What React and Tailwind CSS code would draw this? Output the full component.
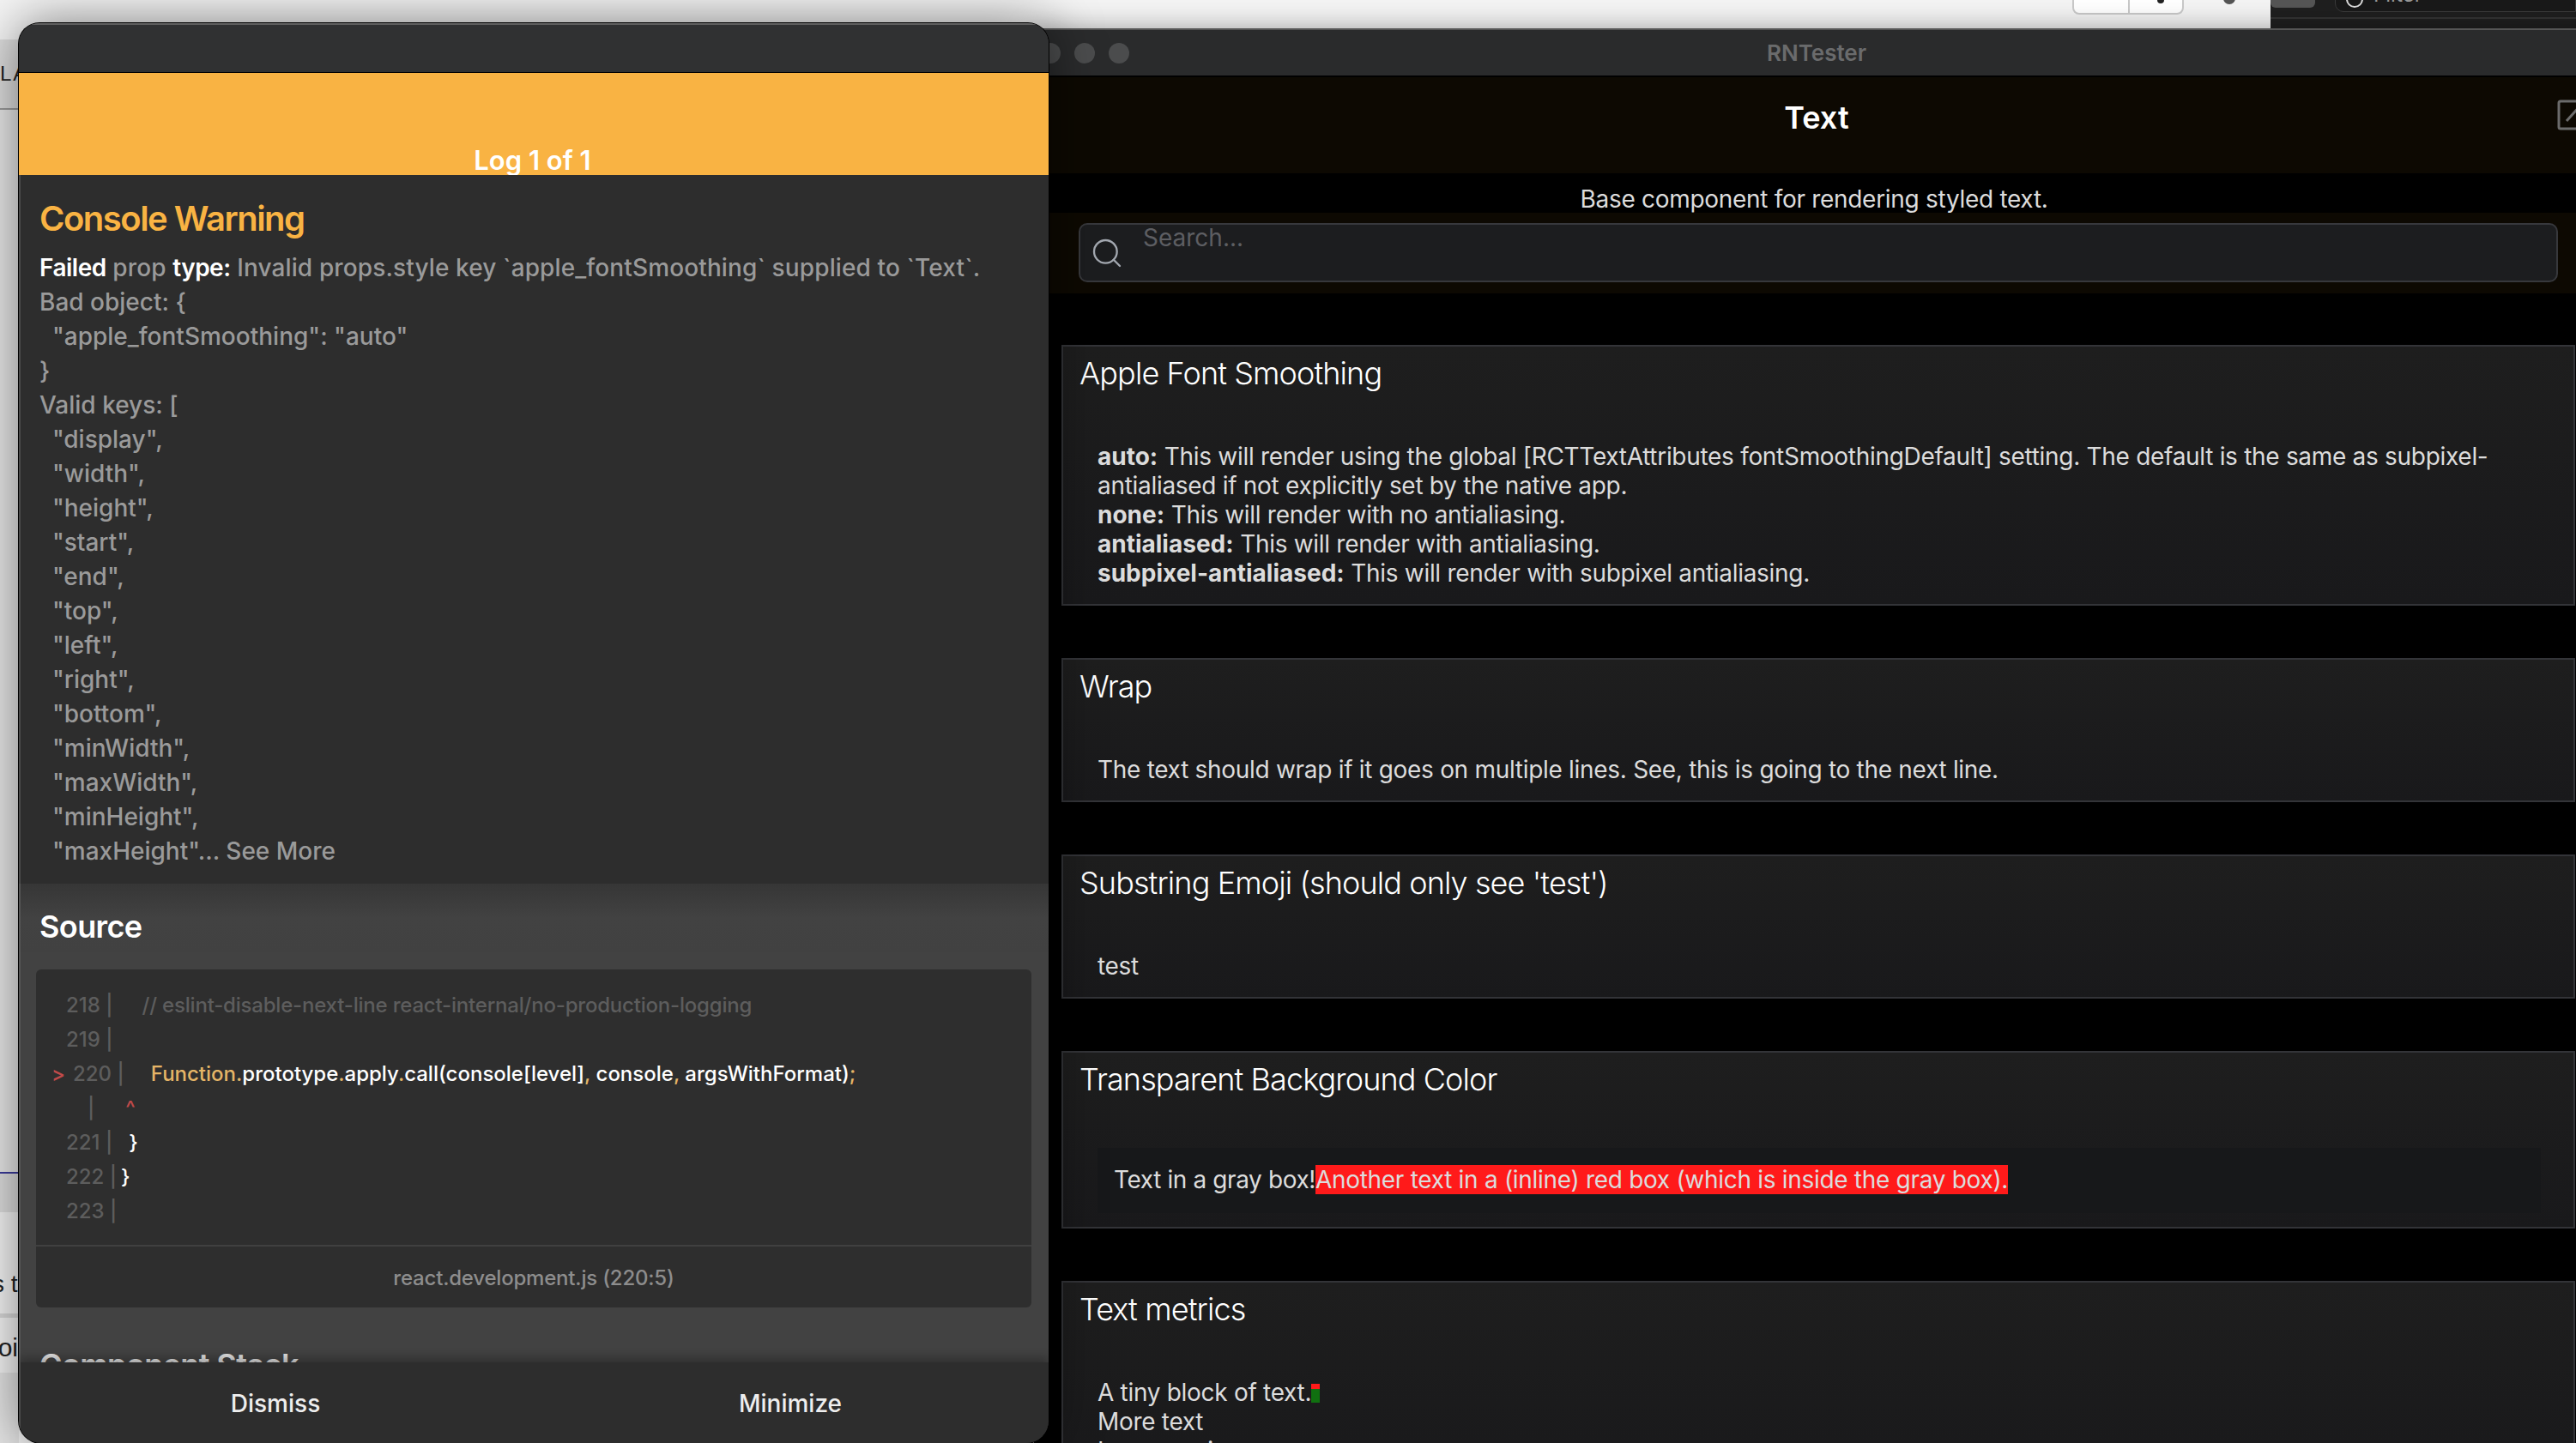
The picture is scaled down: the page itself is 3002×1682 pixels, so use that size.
import { Search } from 'lucide-react';

const messageLines = [
  'Bad object: {',
  '  "apple_fontSmoothing": "auto"',
  '}',
  'Valid keys: [',
  '  "display",',
  '  "width",',
  '  "height",',
  '  "start",',
  '  "end",',
  '  "top",',
  '  "left",',
  '  "right",',
  '  "bottom",',
  '  "minWidth",',
  '  "maxWidth",',
  '  "minHeight",',
  '  "maxHeight"... See More',
];

function Dot({ children }) {
  return <span className="text-[#e5b567]">{children}</span>;
}

function Gutter({ children }) {
  return <span className="text-[#5d5d5d]">{children}</span>;
}

function LogBox() {
  return (
    <div className="absolute left-[22px] top-[27px] w-[1200px] h-[1655px] flex flex-col rounded-t-[24px] rounded-b-[26px] overflow-hidden bg-[#2d2d2d] shadow-[0_0_0_1px_#000,0_0_60px_rgba(0,0,0,0.5)] z-10">
      <div className="h-[58px] shrink-0 bg-[#303132] border-t-2 border-[#606060] border-b border-b-black" />
      <div className="h-[119px] shrink-0 bg-[#f9b343] flex items-end justify-center pr-[3px]">
        <span className="text-[31px] leading-[34px] font-semibold text-white">Log 1 of 1</span>
      </div>

      <div className="flex-1 min-h-0 overflow-hidden">
        <div className="h-[826px] bg-[#2d2d2d] pl-[22px] pr-[25px] border-l-2 border-[#4a4a4a]">
          <div className="pt-[25px] pb-[11px] text-[40px] leading-[52px] font-semibold tracking-[-1.5px] text-[#f9b343]">Console Warning</div>
          <div className="text-[28px] leading-[40px] text-[#9a9a9a] font-medium whitespace-pre">
            <div className="tracking-[0.12px]">
              <span className="text-white font-semibold tracking-[-0.5px]">Failed</span> prop <span className="text-white font-semibold tracking-[-0.5px]">type:</span> Invalid props.style key `apple_fontSmoothing` supplied to `Text`.
            </div>
            {messageLines.map((l, i) => <div key={i}>{l}</div>)}
          </div>
        </div>

        <div className="h-[600px] bg-gradient-to-b from-[#363636] via-[#424242] to-[#414141] bg-[length:100%_80px] bg-no-repeat bg-[#424242] pl-[18px] pr-[20px] border-l-2 border-[#555555]">
          <div className="pt-[28px] h-[100px] pl-[4px] text-[36px] leading-[44px] font-semibold tracking-[-0.6px] text-white">Source</div>
          <div className="h-[394px] rounded-[6px] bg-[#2e2e2e] flex flex-col">
            <div className="h-[321px] pt-[22px] text-[24px] leading-[40px] font-medium text-white whitespace-pre">
              <div className="pl-[35px] text-[#5d5d5d]">218 |<span className="ml-[34px] tracking-[-0.2px]">// eslint-disable-next-line react-internal/no-production-logging</span></div>
              <div className="pl-[35px]"><Gutter>219 |</Gutter></div>
              <div className="pl-[18px]">
                <span className="text-[#c04a4a]">&gt;</span>
                <span className="ml-[9px]"><Gutter>220 |</Gutter></span>
                <span className="ml-[31px]">
                  <Dot>Function.</Dot>prototype<Dot>.</Dot>apply<Dot>.</Dot>call(console[level]<Dot>,</Dot> console<Dot>,</Dot> argsWithFormat)<Dot>;</Dot>
                </span>
              </div>
              <div className="pl-[60px]">
                <Gutter>|</Gutter>
                <span className="ml-[36px] text-[#c04a4a]">^</span>
              </div>
              <div className="pl-[35px]"><Gutter>221 |</Gutter><span className="ml-[19px]">{'}'}</span></div>
              <div className="pl-[35px]"><Gutter>222 |</Gutter><span className="ml-[5px]">{'}'}</span></div>
              <div className="pl-[35px]"><Gutter>223 |</Gutter></div>
            </div>
            <div className="flex-1 border-t-2 border-[#404040] flex items-center justify-center pt-[2px] text-[24px] font-medium tracking-[-0.2px] text-[#8d8d8d]">
              react.development.js (220:5)
            </div>
          </div>
          <div className="mt-[45px] pl-[4px] text-[36px] leading-[44px] font-semibold tracking-[-0.6px] text-[#e0e0e0]">Component Stack</div>
        </div>
      </div>

      <div className="h-[94px] shrink-0 bg-[#2d2d2d] flex pt-[2px] shadow-[0_-6px_10px_rgba(0,0,0,0.25)] border-l-2 border-[#4a4a4a] relative">
        <button className="flex-1 text-[28px] font-medium text-[#eeeeee] pr-[6px]">Dismiss</button>
        <button className="flex-1 text-[28px] font-medium text-[#eeeeee] pr-[4px]">Minimize</button>
      </div>
    </div>
  );
}

function Card({ title, children }) {
  return (
    <div className="border-2 border-[#333438] bg-gradient-to-b from-[#1e1e1e] to-[#19191b] mb-[61px]">
      <div className="pt-[10px] pl-[19px] text-[36px] leading-[42px] font-light tracking-[-0.9px] text-white">{title}</div>
      <div className="mt-[59px] pb-[19px] pl-[40px] pr-[38px] text-[28px] leading-[34px] tracking-[-0.3px] text-[#dcdcdc]">{children}</div>
    </div>
  );
}

function RNTesterWindow() {
  return (
    <div className="absolute left-[1205px] top-[33px] w-[1824px] h-[1649px] flex flex-col bg-black shadow-[0_0_30px_rgba(0,0,0,0.35)] overflow-hidden">
      <div className="h-[57px] shrink-0 relative flex items-center justify-center bg-[#2a2b2c] border-t-2 border-[#555555] border-b-2 border-b-black">
        <div className="absolute left-[7px] top-[15px] flex gap-[16px]">
          <div className="w-[24px] h-[24px] rounded-full bg-[#4b4c4d]" />
          <div className="w-[24px] h-[24px] rounded-full bg-[#4b4c4d]" />
          <div className="w-[24px] h-[24px] rounded-full bg-[#4b4c4d]" />
        </div>
        <span className="text-[26px] font-semibold text-[#6a6b6c]">RNTester</span>
      </div>

      <div className="h-[112px] shrink-0 relative bg-[#0d0902] flex items-center justify-center">
        <span className="text-[36px] font-semibold text-white -mt-[18px]">Text</span>
        <svg className="absolute left-[1775px] top-[26px]" width="46" height="36" viewBox="0 0 46 36" fill="none" stroke="#6b6b6b" strokeWidth="3">
          <path d="M28 2H4a2 2 0 0 0-2 2v28a2 2 0 0 0 2 2h28a2 2 0 0 0 2-2V20" />
          <path d="M11 25L30 4" />
        </svg>
      </div>

      <div className="h-[46px] shrink-0 flex items-center justify-center text-[28px] tracking-[-0.3px] text-[#dcdcdc] pr-[6px] pt-[14px]">
        Base component for rendering styled text.
      </div>

      <div className="h-[94px] shrink-0 bg-[#0d0902] pl-[52px] pr-[48px] pt-[12px]">
        <div className="h-[69px] rounded-[10px] border-2 border-[#37383c] bg-[#1c1d1f] flex items-center">
          <Search size={40} strokeWidth={1.4} className="ml-[11px] shrink-0 text-[#a3a8b0]" />
          <span className="ml-[22px] self-start text-[28px] leading-[30px] text-[#5d5e62]">Search...</span>
        </div>
      </div>

      <div className="flex-1 min-h-0 overflow-hidden pt-[60px] pl-[32px] pr-[28px]">
        <Card title="Apple Font Smoothing">
          <b className="font-bold tracking-normal">auto:</b> This will render using the global [RCTTextAttributes fontSmoothingDefault] setting. The default is the same as subpixel-<br />
          antialiased if not explicitly set by the native app.<br />
          <b className="font-bold tracking-normal">none:</b> This will render with no antialiasing.<br />
          <b className="font-bold tracking-normal">antialiased:</b> This will render with antialiasing.<br />
          <b className="font-bold tracking-normal">subpixel-antialiased:</b> This will render with subpixel antialiasing.
        </Card>
        <Card title="Wrap">The text should wrap if it goes on multiple lines. See, this is going to the next line.</Card>
        <Card title="Substring Emoji (should only see 'test')">test</Card>
        <Card title="Transparent Background Color">
          <div className="bg-[#17181a] pt-[20px] pb-[22px] pl-[19px] -mb-[3px]">
            <span className="tracking-[-0.4px]">Text in a gray box!</span><span className="bg-[#ff1a1a] inline-block">Another text in a (inline) red box (which is inside the gray box).</span>
          </div>
        </Card>
        <Card title="Text metrics">
          <div className="flex items-start">
            A tiny block of text.
            <span className="mt-[7px] w-[10px] h-[22px] flex flex-col">
              <span className="h-[6px] bg-[#ff1a1a]" />
              <span className="flex-1 bg-[#107010]" />
            </span>
          </div>
          <div>More text</div>
          <div>Long version</div>
        </Card>
      </div>
    </div>
  );
}

function BackPage() {
  return (
    <div className="absolute inset-0 bg-[#f4f4f4]">
      <div className="h-[33px] flex justify-end">
        <div className="flex-1 relative overflow-hidden">
          <div className="absolute left-[2415px] -top-[20px] w-[130px] h-[37px] rounded-b-[8px] border-2 border-[#c9c9c9] bg-white flex">
            <div className="w-[65px] border-r-2 border-[#c9c9c9]" />
          </div>
          <div className="absolute left-[2514px] -top-[4px] w-[8px] h-[8px] rounded-full bg-[#222222]" />
          <div className="absolute left-[2591px] -top-[9px] w-[14px] h-[14px] rounded-full bg-[#555555]" />
        </div>
        <div className="w-[356px] bg-[#1f1f1f] relative overflow-hidden">
          <div className="absolute left-0 -top-[20px] w-[52px] h-[29px] rounded-b-[6px] bg-[#555555]" />
          <div className="absolute left-[75px] -top-[20px] right-0 h-[34px] rounded-bl-[10px] border border-[#3a3a3a] bg-[#191919] flex items-end">
            <div className="absolute left-[12px] top-[8px] w-[20px] h-[20px] rounded-full border-2 border-[#dddddd]" />
            <span className="absolute left-[44px] top-[-1px] text-[24px] leading-[28px] text-[#999999]">Filter</span>
          </div>
          <div className="absolute left-0 right-0 top-[20px] h-[2px] bg-[#333333]" />
        </div>
      </div>
      <div className="absolute left-0 top-[46px] w-[22px] h-[1636px] overflow-hidden flex flex-col text-[#222222]">
        <div className="h-[82px] shrink-0 border-b-2 border-[#9a9a9a] bg-[#dddddd] whitespace-pre text-[24px] tracking-[2px] pt-[22px] font-['Liberation_Sans',sans-serif]">LA</div>
        <div className="h-[1240px] shrink-0 border-b-2 border-[#3b3b9b] bg-[#e8e8e8]" />
        <div className="h-[45px] shrink-0 bg-[#dedede]" />
        <div className="h-[118px] shrink-0 bg-[#f4f4f4] whitespace-pre text-[28px] pt-[63px] -indent-[9px] font-['Liberation_Sans',sans-serif]">s t</div>
        <div className="h-[5px] shrink-0 bg-[#d8d8d8]" />
        <div className="h-[64px] shrink-0 bg-[#f4f4f4] whitespace-pre text-[30px] pt-[12px] font-['Liberation_Sans',sans-serif] -indent-[19px]">point</div>
        <div className="flex-1 bg-[#e4e4e4]" />
      </div>
    </div>
  );
}

export default function App() {
  return (
    <div className="relative w-[3002px] h-[1682px] overflow-hidden font-['Inter',sans-serif]">
      <BackPage />
      <RNTesterWindow />
      <LogBox />
    </div>
  );
}
